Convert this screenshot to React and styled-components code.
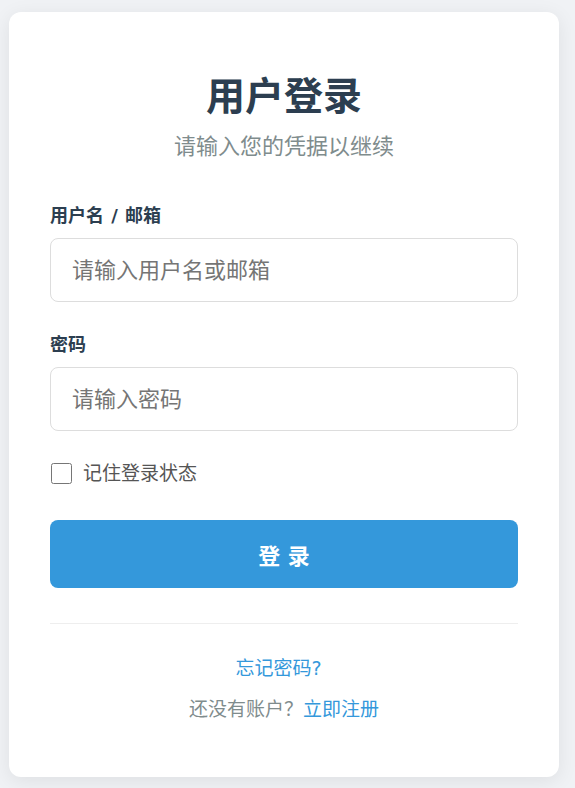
import React from 'react'
import styled, { createGlobalStyle } from 'styled-components'

const GlobalStyle = createGlobalStyle`
  body {
    margin: 0;
    background: #f0f2f5;
    font-family: "DejaVu Sans", "Noto Sans CJK SC", sans-serif;
  }
  * { box-sizing: border-box; }
`

export default function App () {
  return (
    <Page>
      <GlobalStyle />
      <Card>
        <Header>
          <Title>用户登录</Title>
          <Subtitle>请输入您的凭据以继续</Subtitle>
        </Header>

        <Form onSubmit={e => e.preventDefault()}>
          <Field>
            <Label htmlFor='user'>用户名 / 邮箱</Label>
            <Input id='user' type='text' placeholder='请输入用户名或邮箱' />
          </Field>
          <Field>
            <Label htmlFor='pwd'>密码</Label>
            <Input id='pwd' type='password' placeholder='请输入密码' />
          </Field>

          <Remember>
            <Checkbox type='checkbox' />
            记住登录状态
          </Remember>

          <SubmitBtn type='submit'>登 录</SubmitBtn>
        </Form>

        <Divider />

        <Footer>
          <ForgotLink href='#'>忘记密码?</ForgotLink>
          <Muted>还没有账户？<LinkText href='#'>立即注册</LinkText></Muted>
        </Footer>
      </Card>
    </Page>
  )
}

const Page = styled.div`
  padding: 12px 0 12px 9px;
`

const Card = styled.div`
  width: 550px;
  background: #fff;
  border-radius: 12px;
  box-shadow: 0 4px 20px rgba(0, 0, 0, 0.08);
  padding: 61px 41px 54px;
`

const Header = styled.div`
  text-align: center;
  margin-bottom: 39px;
`

const Title = styled.h1`
  margin: 0 0 9px;
  font-size: 39px;
  line-height: 48px;
  font-weight: 700;
  color: #2c3e50;
`

const Subtitle = styled.p`
  margin: 0;
  font-size: 22px;
  line-height: 33px;
  color: #7f8c8d;
`

const Form = styled.form`
  display: flex;
  flex-direction: column;
`

const Field = styled.div`
  display: flex;
  flex-direction: column;
  gap: 9px;
  margin-bottom: 29px;
`

const Label = styled.label`
  font-size: 18px;
  line-height: 27px;
  font-weight: 700;
  word-spacing: 1px;
  color: #2c3e50;
`

const Input = styled.input`
  height: 64px;
  padding: 0 21px;
  border: 1px solid #ddd;
  border-radius: 8px;
  font-family: inherit;
  font-size: 22px;
  color: #333;
  outline: none;

  &::placeholder {
    color: #757575;
  }
`

const Remember = styled.label`
  display: flex;
  align-items: center;
  gap: 11px;
  font-size: 19px;
  line-height: 27px;
  color: #555;
  margin-bottom: 33px;
  margin-left: 1px;
`

const Checkbox = styled.input`
  width: 21px;
  height: 21px;
  margin: 0;
`

const SubmitBtn = styled.button`
  height: 68px;
  border: none;
  border-radius: 8px;
  background: #3498db;
  color: #fff;
  font-family: inherit;
  font-size: 22px;
  font-weight: 700;
  cursor: pointer;
`

const Divider = styled.hr`
  border: none;
  border-top: 1px solid #eee;
  margin: 35px 0 31px;
`

const Footer = styled.div`
  display: flex;
  flex-direction: column;
  align-items: center;
  gap: 14px;
  font-size: 19px;
  line-height: 27px;
`

const LinkText = styled.a`
  color: #3498db;
  text-decoration: none;
`

const ForgotLink = styled(LinkText)`
  margin-right: 11px;
`

const Muted = styled.div`
  color: #7f8c8d;
`
